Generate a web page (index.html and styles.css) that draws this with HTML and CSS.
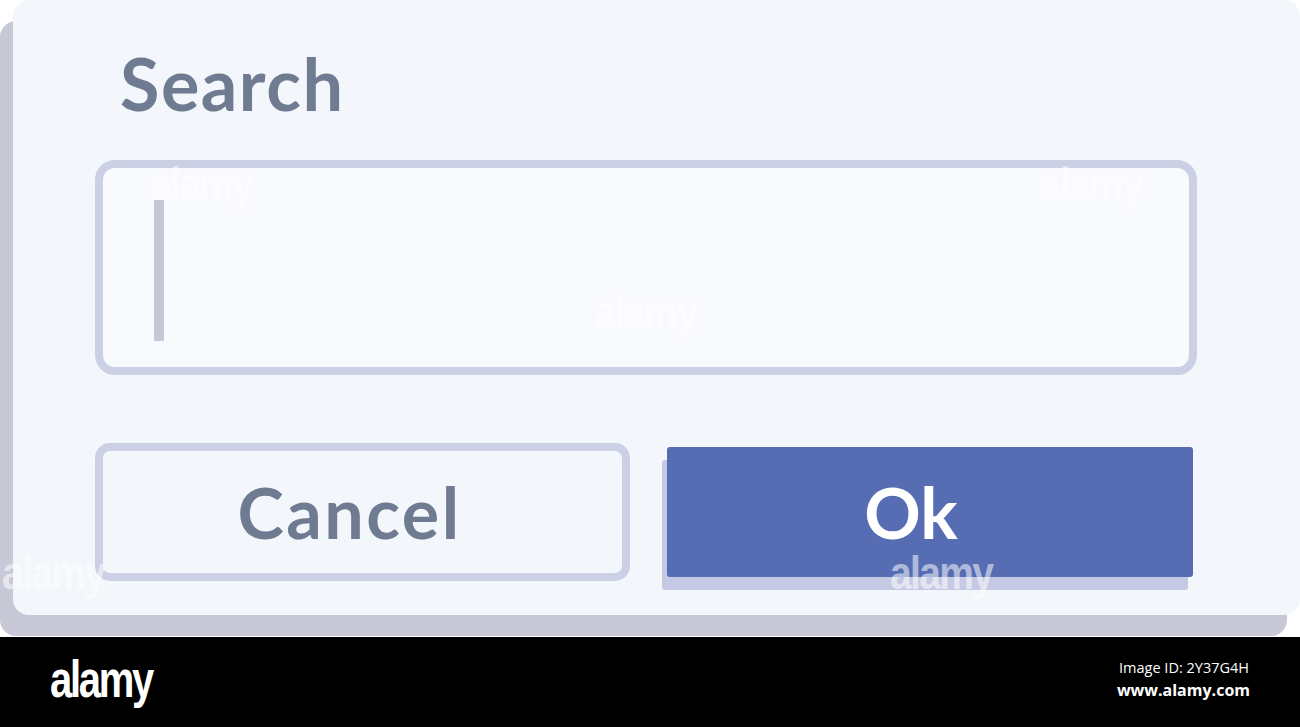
FILE: index.html
```html
<!DOCTYPE html>
<html lang="en">
<head>
<meta charset="utf-8">
<title>Search dialog</title>
<link rel="stylesheet" href="styles.css">
</head>
<body>
<div class="stage">
  <div class="dialog">
    <h1 class="title">Search</h1>
    <div class="field"><span class="caret"></span></div>
    <div class="actions">
      <button class="btn btn-cancel">Cancel</button>
      <button class="btn btn-ok">Ok</button>
    </div>
  </div>
  <div class="marks">
    <span class="mark" style="left:150px;top:164px">alamy</span>
    <span class="mark" style="left:594px;top:292px">alamy</span>
    <span class="mark" style="left:1040px;top:164px">alamy</span>
    <span class="mark" style="left:2px;top:553px">alamy</span>
    <span class="mark" style="left:890px;top:553px">alamy</span>
  </div>
</div>
<footer class="bar">
  <div class="logo">alamy</div>
  <div class="meta">
    <div class="id">Image ID: 2Y37G4H</div>
    <div class="site">www.alamy.com</div>
  </div>
</footer>
</body>
</html>
```
FILE: styles.css
```css
html, body {
  margin: 0;
  padding: 0;
  background: #ffffff;
}
body {
  width: 1300px;
  height: 727px;
  overflow: hidden;
  font-family: "Lato", "Noto Sans", sans-serif;
}
.stage {
  position: relative;
  height: 637px;
  padding-left: 13px;
  box-sizing: border-box;
}
.dialog {
  width: 1287px;
  height: 615px;
  box-sizing: border-box;
  background: #f3f6fb;
  border-radius: 16px;
  box-shadow: -13px 21px 0 #c8c8d6;
  padding: 0 0 0 82px;
  display: flex;
  flex-direction: column;
}
.title {
  margin: 40px 0 0 25px;
  font-size: 72px;
  line-height: 86px;
  font-weight: 700;
  color: #6f7b91;
  letter-spacing: 1.5px;
}
.field {
  margin-top: 34px;
  width: 1102px;
  height: 215px;
  box-sizing: border-box;
  border: 8px solid #ccd0e4;
  border-radius: 20px;
  background: #f9fafd;
  padding: 32px 0 0 51px;
}
.caret {
  display: block;
  width: 10px;
  height: 141px;
  background: #c6c8d8;
}
.actions {
  margin-top: 68px;
  display: flex;
  align-items: flex-start;
  gap: 37px;
}
.btn {
  font-family: "Lato", "Noto Sans", sans-serif;
  font-size: 70px;
  line-height: 1;
  font-weight: 700;
  padding: 0;
  cursor: pointer;
}
.btn-cancel {
  width: 535px;
  height: 138px;
  border: 8px solid #ccd0e4;
  border-radius: 15px;
  background: #f3f6fb;
  color: #6f7b91;
  letter-spacing: 2.5px;
  padding-right: 26px;
}
.btn-ok {
  margin-top: 4px;
  width: 526px;
  height: 130px;
  border: none;
  border-radius: 3px;
  background: #566db3;
  color: #ffffff;
  box-shadow: -5px 13px 0 #c5c9e3;
  padding-right: 38px;
}
.marks {
  position: absolute;
  inset: 0;
  pointer-events: none;
}
.mark {
  position: absolute;
  font-family: "Liberation Sans Narrow", "Liberation Sans", sans-serif;
  font-weight: 700;
  font-size: 46px;
  line-height: 40px;
  letter-spacing: -2px;
  color: rgba(255, 255, 255, 0.55);
  transform: scaleX(0.85);
  transform-origin: left top;
}
.bar {
  height: 90px;
  background: #000000;
  display: flex;
  justify-content: space-between;
  align-items: center;
  padding: 0 50px;
  color: #ffffff;
}
.logo {
  font-family: "Liberation Sans Narrow", "Liberation Sans", sans-serif;
  font-weight: 700;
  font-size: 52px;
  letter-spacing: -3px;
  margin-top: -6px;
  transform: scaleX(0.77);
  transform-origin: left center;
}
.meta {
  display: flex;
  flex-direction: column;
  align-items: flex-end;
  font-family: "Open Sans", sans-serif;
  margin-top: -6px;
}
.id {
  font-size: 14.5px;
  line-height: 22px;
  padding-right: 1px;
}
.site {
  font-size: 16px;
  font-weight: 700;
  line-height: 22px;
}
```
